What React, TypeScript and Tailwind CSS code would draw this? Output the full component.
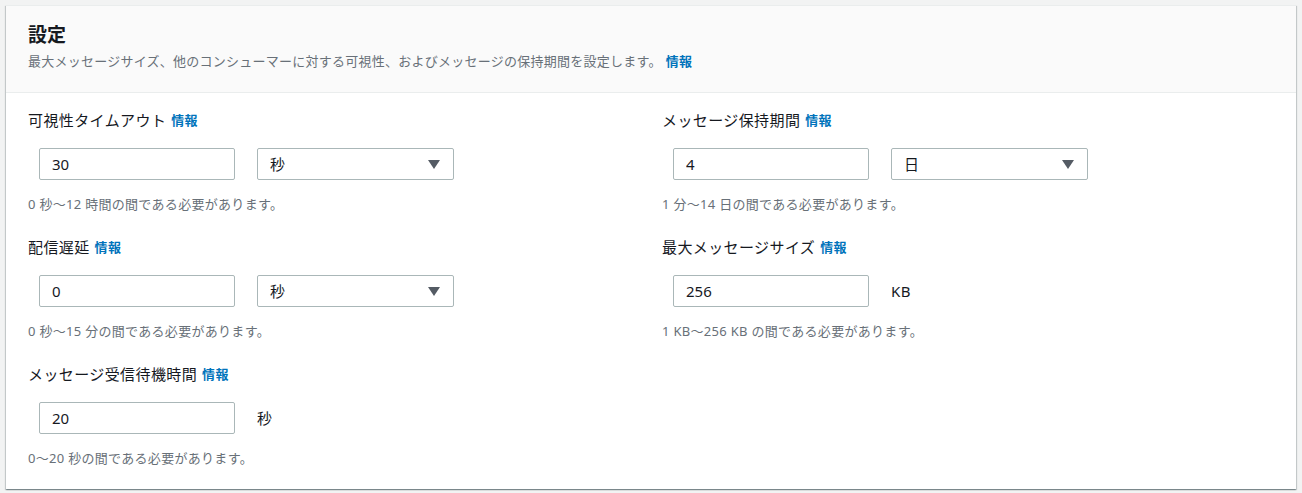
import React from "react";

const font = { fontFamily: '"Noto Sans", "Noto Sans CJK JP", sans-serif' };

function Info() {
  return <span className="text-[13px] font-bold text-[#0073bb] ml-[5px] tracking-[0.3px]">情報</span>;
}

function Caret() {
  return (
    <svg width="12" height="9" viewBox="0 0 12 9" className="shrink-0">
      <path d="M0 0 H12 L6 9 Z" fill="#545b64" />
    </svg>
  );
}

type FieldProps = {
  label: string;
  value: string;
  unit: string;
  select: boolean;
  hint: string;
};

function Field({ label, value, unit, select, hint }: FieldProps) {
  return (
    <div className="flex flex-col">
      <div className="h-[22px] leading-[22px] text-[15px] text-[#16191f] flex items-center">
        <span className="tracking-[0.4px]">{label}</span>
        <Info />
      </div>
      <div className="mt-[17px] ml-[11px] flex items-center gap-[22px] h-[32px]">
        <input
          readOnly
          value={value}
          className="w-[196px] h-[32px] border border-[#aab7b8] rounded-[2px] pl-[12px] text-[15px] text-[#16191f] bg-white outline-none"
          style={font}
        />
        {select ? (
          <div className="w-[197px] h-[32px] border border-[#aab7b8] rounded-[2px] pl-[12px] pr-[13px] flex items-center justify-between bg-white">
            <span className="text-[15px] text-[#16191f]">{unit}</span>
            <Caret />
          </div>
        ) : (
          <span className="text-[15px] text-[#16191f] tracking-[0.5px]">{unit}</span>
        )}
      </div>
      <div className="mt-[16px] h-[16px] leading-[16px] text-[13px] text-[#687078] tracking-[0.3px]">{hint}</div>
    </div>
  );
}

export default function App() {
  return (
    <div className="bg-[#f2f3f3] w-[1302px] h-[493px] px-[6px] pt-[5px]" style={font}>
      <div className="bg-white border-t border-[#eaeded] shadow-[0_1px_1px_0_rgba(0,28,36,0.3),1px_1px_1px_0_rgba(0,28,36,0.15),-1px_1px_1px_0_rgba(0,28,36,0.15)]">
        <div className="bg-[#fafafa] border-b border-[#eaeded] px-[22px] pt-[18px] pb-[23px]">
          <div className="h-[22px] leading-[22px] text-[19px] font-bold text-[#16191f]">設定</div>
          <div className="mt-[7px] h-[16px] leading-[16px] text-[13px] text-[#687078] tracking-[0.25px]">
            最大メッセージサイズ、他のコンシューマーに対する可視性、およびメッセージの保持期間を設定します。
            <span className="font-bold text-[#0073bb] ml-[4px]">情報</span>
          </div>
        </div>
        <div className="px-[22px] pt-[16px] pb-[23px] grid grid-cols-2 gap-x-[22px] gap-y-[24px]">
          <Field label="可視性タイムアウト" value="30" unit="秒" select hint="0 秒～12 時間の間である必要があります。" />
          <Field label="メッセージ保持期間" value="4" unit="日" select hint="1 分～14 日の間である必要があります。" />
          <Field label="配信遅延" value="0" unit="秒" select hint="0 秒～15 分の間である必要があります。" />
          <Field label="最大メッセージサイズ" value="256" unit="KB" select={false} hint="1 KB～256 KB の間である必要があります。" />
          <Field label="メッセージ受信待機時間" value="20" unit="秒" select={false} hint="0～20 秒の間である必要があります。" />
          <div />
        </div>
      </div>
    </div>
  );
}
